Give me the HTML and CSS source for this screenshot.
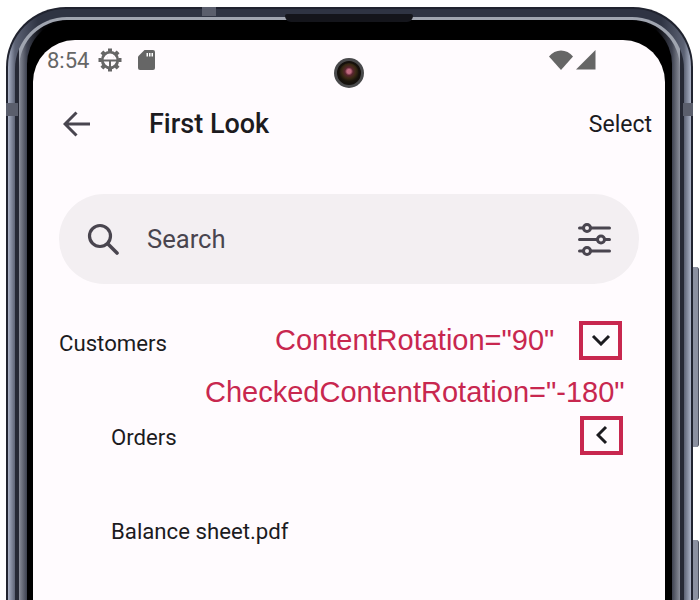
FILE: index.html
```html
<!DOCTYPE html>
<html lang="en">
<head>
    <meta charset="UTF-8">
    <meta name="viewport" content="width=device-width, initial-scale=1.0">
    <title>First Look</title>
    <link rel="stylesheet" href="styles.css">
</head>
<body>

    <!-- Side buttons -->
    <div class="side-button side-button-top"></div>
    <div class="side-button side-button-bottom"></div>

    <!-- Phone frame -->
    <div class="phone">
        <div class="band-outer">
            <div class="band-mid">
                <div class="band-inner">
                    <div class="band-gray">
                        <div class="band-black">
                            <div class="screen">

                                <!-- Status bar -->
                                <div class="status-bar">
                                    <span class="clock">8:54</span>
                                    <svg class="status-icon" width="24" height="24" viewBox="0 0 24 24">
                                        <circle cx="12" cy="12" r="7.800" fill="none" stroke="#666" stroke-width="2.800"/>
                                        <path d="M12 .5v3M12 20.500v3M.5 12h3M20.500 12h3M3.900 3.900l2.100 2.100M18 18l2.100 2.100M3.900 20.100L6 18M18 6l2.100-2.100" stroke="#666" stroke-width="4"/>
                                        <path d="M5 12.500h14M12 12.500v7M9 9.200h.1M15 9.200h.1" stroke="#666" stroke-width="2"/>
                                    </svg>
                                    <svg class="status-icon" width="17" height="20" viewBox="0 0 17 20">
                                        <path d="M6.500 0H15a2 2 0 0 1 2 2v16a2 2 0 0 1-2 2H2a2 2 0 0 1-2-2V6.500z" fill="#666"/>
                                        <path d="M8.500 3h1.500v3.500H8.500zM11 3h1.500v3.500H11zM13.500 3H15v3.500h-1.500z" fill="#fff"/>
                                    </svg>
                                    <div class="status-right">
                                        <svg width="24" height="20" viewBox="0 0 24 20">
                                            <path d="M0 6.500C3 2.500 7.500 .5 12 .5S21 2.500 24 6.500L12 20z" fill="#666"/>
                                        </svg>
                                        <svg width="20" height="20" viewBox="0 0 20 20">
                                            <path d="M0 19.500L19.500 0v19.500z" fill="#666"/>
                                        </svg>
                                    </div>
                                </div>

                                <!-- Toolbar -->
                                <div class="toolbar">
                                    <svg class="back" width="28" height="26" viewBox="0 0 28 26">
                                        <path d="M27 13H2.500M13.500 1.500L2 13l11.500 11.500" fill="none" stroke="#49454f" stroke-width="3"/>
                                    </svg>
                                    <h1>First Look</h1>
                                    <a class="select" href="#">Select</a>
                                </div>

                                <!-- Search -->
                                <div class="search">
                                    <svg class="search-icon" width="32" height="32" viewBox="0 0 32 32">
                                        <circle cx="13" cy="13" r="10.500" fill="none" stroke="#49454f" stroke-width="3.200"/>
                                        <path d="M21 21l9 9" stroke="#49454f" stroke-width="3.600" stroke-linecap="round"/>
                                    </svg>
                                    <span class="search-text">Search</span>
                                    <svg class="tune-icon" width="33" height="33" viewBox="0 0 33 33">
                                        <path d="M1.500 5h30M1.500 16.500h30M1.500 28h30" stroke="#49454f" stroke-width="3" stroke-linecap="round"/>
                                        <circle cx="9" cy="5" r="3.500" fill="#f3eff2" stroke="#49454f" stroke-width="3"/>
                                        <circle cx="23" cy="16.500" r="3.500" fill="#f3eff2" stroke="#49454f" stroke-width="3"/>
                                        <circle cx="9" cy="28" r="3.500" fill="#f3eff2" stroke="#49454f" stroke-width="3"/>
                                    </svg>
                                </div>

                                <!-- Tree -->
                                <div class="tree">
                                    <div class="row row-first">
                                        <span>Customers</span>
                                        <span class="callout callout-one">ContentRotation="90"</span>
                                        <div class="toggle toggle-first">
                                            <svg width="20" height="12" viewBox="0 0 20 12">
                                                <path d="M2 2l8 8 8-8" fill="none" stroke="#1c1b1f" stroke-width="3"/>
                                            </svg>
                                        </div>
                                    </div>
                                    <div class="row row-child">
                                        <span>Orders</span>
                                        <span class="callout callout-two">CheckedContentRotation="-180"</span>
                                        <div class="toggle toggle-child">
                                            <svg width="12" height="20" viewBox="0 0 12 20">
                                                <path d="M10 2l-8 8 8 8" fill="none" stroke="#1c1b1f" stroke-width="3"/>
                                            </svg>
                                        </div>
                                    </div>
                                    <div class="row row-child">
                                        <span>Balance sheet.pdf</span>
                                    </div>
                                </div>

                                <!-- Camera -->
                                <div class="camera"><div class="lens"></div></div>
                            </div>
                        </div>
                    </div>
                </div>
            </div>
        </div>
        <div class="speaker"></div>
        <div class="seam seam-top"></div>
        <div class="seam seam-left"></div>
        <div class="seam seam-right"></div>
    </div>

</body>
</html>
```

FILE: styles.css
```css
/* Global */
* {
    margin: 0;
    padding: 0;
    box-sizing: border-box;
}
html, body {
    height: 600px;
    overflow: hidden;
}
body {
    position: relative;
    background: #fff;
    font-family: Roboto, sans-serif;
    padding: 7px 7px 0 6px;
}
a {
    color: inherit;
    text-decoration: none;
}

/* Phone frame */
.phone {
    position: relative;
    height: 593px;
}
.band-outer {
    height: 100%;
    padding: 2px 2px 0;
    border-radius: 60px 60px 0 0;
    background: #20232f;
}
.band-mid {
    height: 100%;
    padding: 8px 7px 0;
    border-radius: 58px 58px 0 0;
    background: linear-gradient(90deg, #aab2c6, #5c6274 7px, #2f3443 30px, #2f3443 calc(100% - 30px), #5c6274 calc(100% - 7px), #aab2c6);
}
.band-inner {
    height: 100%;
    padding: 3px 4px 0;
    border-radius: 52px 52px 0 0;
    background: linear-gradient(90deg, #262935, #262935 4px, #a0a5b0 4px, #a0a5b0 calc(100% - 4px), #262935 calc(100% - 4px));
}
.band-gray {
    height: 100%;
    padding: 0 8px;
    border-radius: 48px 48px 0 0;
    background: linear-gradient(90deg, #8a8e9a, #3e4250 8px, #050508 24px, #050508 calc(100% - 24px), #3e4250 calc(100% - 8px), #8a8e9a);
}
.band-black {
    height: 100%;
    padding: 20px 7px 0 6px;
    border-radius: 44px 44px 0 0;
    background: #000;
}
.screen {
    position: relative;
    height: 100%;
    background: #fffbfe;
    border-radius: 42px 42px 0 0;
}
.speaker {
    position: absolute;
    top: 7px;
    left: 279px;
    width: 128px;
    height: 8px;
    border-radius: 2px 2px 6px 6px;
    background: #14151b;
}
.seam {
    position: absolute;
    background: #5a5e6c;
}
.seam-top {
    top: 0;
    left: 196px;
    width: 14px;
    height: 9px;
}
.seam-left {
    top: 96px;
    left: 0;
    width: 12px;
    height: 13px;
}
.seam-right {
    top: 96px;
    right: 0;
    width: 10px;
    height: 13px;
}

/* Side buttons */
.side-button {
    position: absolute;
    right: 1px;
    width: 6px;
    background: #8b90a0;
    border-radius: 0 3px 3px 0;
    border-right: 1px solid #4a4e5c;
}
.side-button-top {
    top: 267px;
    height: 180px;
}
.side-button-bottom {
    top: 540px;
    height: 60px;
}

/* Status bar */
.status-bar {
    display: flex;
    align-items: center;
    height: 40px;
    padding: 0 69px 0 14px;
    color: #666;
}
.clock {
    font-size: 22px;
    margin-right: 9px;
}
.status-icon {
    margin-right: 16px;
}
.status-right {
    display: flex;
    align-items: center;
    gap: 3px;
    margin-left: auto;
}

/* Toolbar */
.toolbar {
    display: flex;
    align-items: center;
    height: 88px;
    padding: 0 13px 0 30px;
}
.back {
    margin-right: 58px;
}
.toolbar h1 {
    font-size: 27px;
    font-weight: 500;
    color: #1c1b1f;
}
.select {
    margin-left: auto;
    font-size: 23px;
    color: #1c1b1f;
}

/* Search */
.search {
    display: flex;
    align-items: center;
    height: 90px;
    margin: 26px 26px 0;
    padding: 0 28px 0 28px;
    background: #f3eff2;
    border-radius: 45px;
}
.search-text {
    margin-left: 28px;
    font-size: 25.600px;
    color: #49454f;
}
.tune-icon {
    margin-left: auto;
}

/* Tree */
.tree {
    padding: 12px 43px 0 26px;
}
.row {
    position: relative;
    display: flex;
    align-items: center;
    height: 94px;
    font-size: 22.200px;
    color: #1c1b1f;
}
.row-child {
    padding-left: 52px;
}
.toggle {
    display: flex;
    align-items: center;
    justify-content: center;
    width: 43px;
    height: 39px;
    margin-left: auto;
    border: 4px solid #c8274f;
}
.toggle-first {
    margin-bottom: 6px;
}
.toggle-child {
    margin-right: -1px;
    margin-bottom: 4px;
}
.callout {
    position: absolute;
    font-family: "Liberation Sans", Arial, sans-serif;
    font-size: 29px;
    color: #c8274f;
    white-space: nowrap;
}
.callout-one {
    top: 28px;
    left: 216px;
}
.callout-two {
    top: -14px;
    left: 146px;
}

/* Camera */
.camera {
    position: absolute;
    top: 18px;
    left: 301px;
    width: 30px;
    height: 30px;
    padding: 3px;
    border-radius: 50%;
    background: #4a4a4c;
}
.lens {
    width: 24px;
    height: 24px;
    border-radius: 50%;
    border: 2px solid #15100c;
    background: radial-gradient(circle at 50% 42%, #c06a80 0 2px, #5a2530 4px, #3a2a14 7px, #1a140c 10px);
}
```
